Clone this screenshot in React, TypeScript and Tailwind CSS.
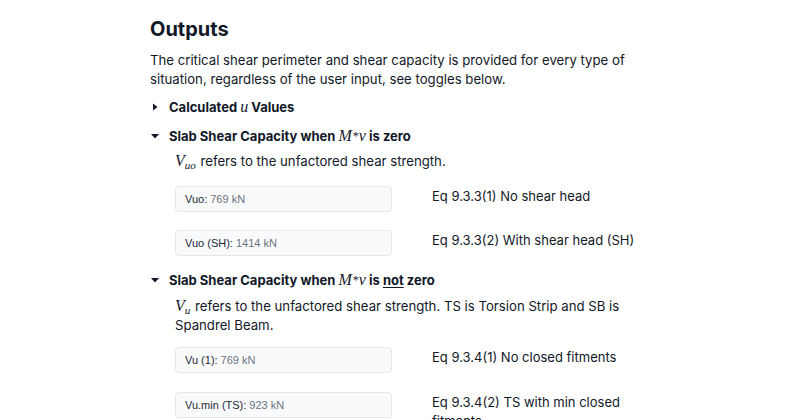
import React from "react";

const sans = { fontFamily: "Inter, 'Noto Sans', sans-serif" };

function Caret({ open }: { open: boolean }) {
  return open ? (
    <svg width="10" height="10" viewBox="0 0 10 10" className="shrink-0">
      <polygon points="1,3 9,3 5,7.5" fill="#111827" />
    </svg>
  ) : (
    <svg width="10" height="10" viewBox="0 0 10 10" className="shrink-0">
      <polygon points="3,1.5 7.5,5 3,8.5" fill="#111827" />
    </svg>
  );
}

function M({ children }: { children: React.ReactNode }) {
  return (
    <span className="font-['Liberation_Serif',serif] italic font-normal text-[16px] leading-none">{children}</span>
  );
}

function Star() {
  return <sup className="not-italic text-[12px] relative top-[-1px] ml-[1px]">*</sup>;
}

function Field({ label, value, eq }: { label: string; value: string; eq: string }) {
  return (
    <div className="grid grid-cols-[217px_217px] gap-x-[40px]">
      <div className="h-[26px] rounded border border-[#e5e7eb] bg-[#f9fafb] px-[9px] flex items-center text-[11px] font-['Liberation_Sans',sans-serif]">
        <span className="text-[#1f2937]">{label}:</span>
        <span className="text-[#6b7280] ml-[3px]">{value}</span>
      </div>
      <div className="text-[13px] leading-[19px] text-[#111827] pt-[1px]">{eq}</div>
    </div>
  );
}

function Toggle({ open, children, className }: { open: boolean; children: React.ReactNode; className: string }) {
  return (
    <div className={"flex items-center gap-[9px] text-[13px] font-bold h-[20px] " + className}>
      <Caret open={open} />
      <span className="leading-none">{children}</span>
    </div>
  );
}

export default function App() {
  return (
    <div className="w-[800px] h-[420px] overflow-hidden bg-white" style={sans}>
      <div className="w-[500px] mx-auto pt-[15px] text-[#111827]">
        <h1 className="text-[20px] leading-[28px] font-bold">Outputs</h1>
        <p className="mt-[8px] text-[13.2px] leading-[19px]">
          The critical shear perimeter and shear capacity is provided for every type of situation, regardless of the user input, see toggles below.
        </p>
        <Toggle open={false} className="mt-[8px]">
          Calculated <M>u</M> Values
        </Toggle>
        <Toggle open={true} className="mt-[9px]">
          Slab Shear Capacity when <M>M<Star />v</M> is zero
        </Toggle>
        <div className="pl-[25px]">
          <p className="mt-[6px] text-[13.2px] leading-[19px]">
            <M>V<sub className="text-[11px] mr-[1px]">uo</sub></M> refers to the unfactored shear strength.
          </p>
          <div className="mt-[15px] flex flex-col gap-[18px]">
            <Field label="Vuo" value="769 kN" eq="Eq 9.3.3(1) No shear head" />
            <Field label="Vuo (SH)" value="1414 kN" eq="Eq 9.3.3(2) With shear head (SH)" />
          </div>
        </div>
        <Toggle open={true} className="mt-[14px]">
          Slab Shear Capacity when <M>M<Star />v</M> is <span className="underline underline-offset-2">not</span> zero
        </Toggle>
        <div className="pl-[25px]">
          <p className="mt-[7px] text-[13.2px] leading-[19px]">
            <M>V<sub className="text-[11px] mr-[1px]">u</sub></M> refers to the unfactored shear strength. TS is Torsion Strip and SB is Spandrel Beam.
          </p>
          <div className="mt-[12px] flex flex-col gap-[19px]">
            <Field label="Vu (1)" value="769 kN" eq="Eq 9.3.4(1) No closed fitments" />
            <Field label="Vu.min (TS)" value="923 kN" eq="Eq 9.3.4(2) TS with min closed fitments" />
          </div>
        </div>
      </div>
    </div>
  );
}
